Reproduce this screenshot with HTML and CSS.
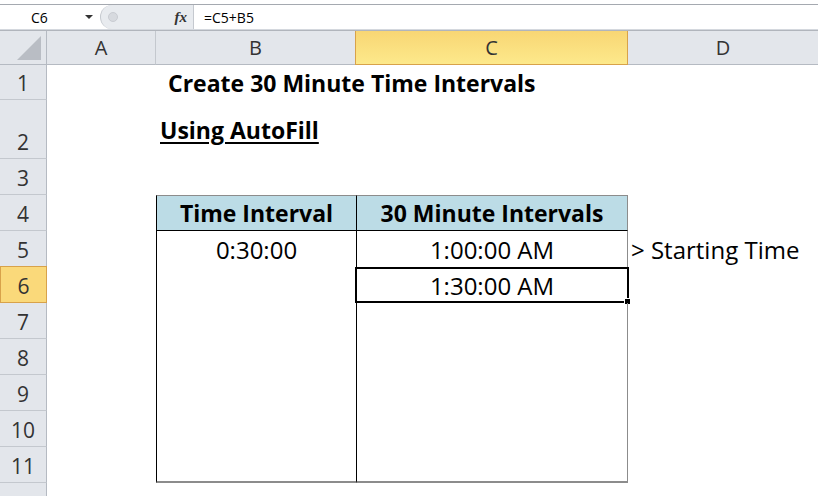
FILE: index.html
```html
<!DOCTYPE html>
<html lang="en">
  <head>
    <meta charset="UTF-8" />
    <meta name="viewport" content="width=device-width, initial-scale=1.0" />
    <title>Create 30 Minute Time Intervals</title>
    <link rel="stylesheet" href="styles.css">
  </head>
  <body>
    <div class="formulaBar">
      <div class="nameBox">
        <span class="cellRef">C6</span>
        <span class="arrow"></span>
      </div>
      <div class="fxArea">
        <span class="knob"></span>
        <span class="fx">fx</span>
      </div>
      <div class="formula">=C5+B5</div>
    </div>
    <div class="sheet">
      <div class="corner"><span class="tri"></span></div>
      <div class="colHead">A</div>
      <div class="colHead">B</div>
      <div class="colHead active">C</div>
      <div class="colHead last">D</div>

      <div class="rowHead">1</div>
      <div class="cell"></div>
      <div class="cell title">Create 30 Minute Time Intervals</div>
      <div class="cell"></div>
      <div class="cell"></div>

      <div class="rowHead">2</div>
      <div class="cell"></div>
      <div class="cell subtitle"><u>Using AutoFill</u></div>
      <div class="cell"></div>
      <div class="cell"></div>

      <div class="rowHead">3</div>
      <div class="cell"></div>
      <div class="cell"></div>
      <div class="cell"></div>
      <div class="cell"></div>

      <div class="rowHead">4</div>
      <div class="cell"></div>
      <div class="cell th colB">Time Interval</div>
      <div class="cell th colC">30 Minute Intervals</div>
      <div class="cell"></div>

      <div class="rowHead">5</div>
      <div class="cell"></div>
      <div class="cell td colB">0:30:00</div>
      <div class="cell td colC">1:00:00 AM</div>
      <div class="cell note">&gt; Starting Time</div>

      <div class="rowHead active">6</div>
      <div class="cell"></div>
      <div class="cell td colB"></div>
      <div class="cell td colC selected">1:30:00 AM<span class="handle"></span></div>
      <div class="cell"></div>

      <div class="rowHead">7</div>
      <div class="cell"></div>
      <div class="cell td colB"></div>
      <div class="cell td colC"></div>
      <div class="cell"></div>

      <div class="rowHead">8</div>
      <div class="cell"></div>
      <div class="cell td colB"></div>
      <div class="cell td colC"></div>
      <div class="cell"></div>

      <div class="rowHead">9</div>
      <div class="cell"></div>
      <div class="cell td colB"></div>
      <div class="cell td colC"></div>
      <div class="cell"></div>

      <div class="rowHead">10</div>
      <div class="cell"></div>
      <div class="cell td colB"></div>
      <div class="cell td colC"></div>
      <div class="cell"></div>

      <div class="rowHead">11</div>
      <div class="cell"></div>
      <div class="cell td colB endRow"></div>
      <div class="cell td colC endRow"></div>
      <div class="cell"></div>

      <div class="rowHead"></div>
      <div class="cell"></div>
      <div class="cell"></div>
      <div class="cell"></div>
      <div class="cell"></div>
    </div>
  </body>
</html>
```

FILE: styles.css
```css
body {
  margin: 0;
  background-color: #fff;
  font-family: "Open Sans", sans-serif;
  color: #000;
  width: 818px;
  height: 496px;
  overflow: hidden;
}

.formulaBar {
  display: flex;
  margin-top: 4px;
  height: 24px;
  border-top: 1px solid #a5a9b0;
  border-bottom: 1px solid #d4d8de;
  font-size: 14px;
}

.nameBox {
  width: 100px;
  display: flex;
  align-items: center;
  position: relative;
}

.cellRef {
  margin-left: 31px;
}

.arrow {
  position: absolute;
  left: 85px;
  top: 10px;
  border-left: 4px solid transparent;
  border-right: 4px solid transparent;
  border-top: 4px solid #333;
}

.fxArea {
  width: 94px;
  background-color: #e8ebef;
  border-radius: 12px 0 0 12px;
  border-left: 1px solid #c5c9cf;
  border-right: 1px solid #c5c9cf;
  display: flex;
  align-items: center;
  justify-content: space-between;
  padding: 0 6px 0 7px;
  box-sizing: border-box;
}

.knob {
  width: 8px;
  height: 8px;
  border-radius: 50%;
  background-color: #d7dadf;
  border: 1px solid #c9ccd2;
}

.fx {
  font-family: "Liberation Serif", serif;
  font-style: italic;
  font-weight: bold;
  font-size: 15px;
  color: #333;
}

.formula {
  display: flex;
  align-items: center;
  padding-left: 10px;
}

.sheet {
  display: grid;
  grid-template-columns: 47px 109px 200px 272px 190px;
  grid-template-rows: 34px 35px 59px 36px 36px 36px 36px 36px 36px 36px 36px 36px 20px;
  border-top: 1px solid #b1b5bc;
}

.corner {
  background-color: #e3e6eb;
  border-right: 1px solid #b5bac2;
  border-bottom: 1px solid #b5bac2;
  position: relative;
}

.tri {
  position: absolute;
  right: 5px;
  bottom: 4px;
  width: 0;
  height: 0;
  border-left: 24px solid transparent;
  border-bottom: 24px solid #b9bdc4;
}

.colHead {
  background-color: #e3e6eb;
  border-right: 1px solid #c4c8ce;
  border-bottom: 1px solid #b5bac2;
  display: flex;
  align-items: center;
  justify-content: center;
  font-size: 20px;
  color: #333;
}

.colHead.last {
  border-right: none;
}

.colHead.active {
  background: linear-gradient(#f8d674, #fde98b);
  border-right: 1px solid #d8a24a;
  border-left: 1px solid #d8a24a;
  margin-left: -1px;
  border-bottom-color: #d8a24a;
}

.rowHead {
  background-color: #e3e6eb;
  border-right: 1px solid #b5bac2;
  border-bottom: 1px solid #c4c8ce;
  display: flex;
  align-items: flex-end;
  justify-content: center;
  padding-bottom: 2px;
  box-sizing: border-box;
  font-size: 21px;
  color: #333;
}

.rowHead.active {
  background-color: #fad97a;
  border: 1px solid #d8a24a;
  margin-top: -1px;
}

.cell {
  display: flex;
  align-items: flex-end;
  padding-bottom: 2px;
  box-sizing: border-box;
  font-size: 24px;
  line-height: 30px;
  white-space: nowrap;
  position: relative;
}

.title {
  font-weight: bold;
  font-size: 23px;
  padding-left: 12px;
}

.subtitle {
  font-weight: bold;
  font-size: 23px;
  padding-left: 4px;
  padding-bottom: 14px;
}

.subtitle u {
  text-underline-offset: 3px;
  text-decoration-thickness: 2px;
}

.th {
  background-color: #bcdce6;
  font-weight: bold;
  font-size: 23px;
  justify-content: center;
  border-top: 1px solid #8c8c8c;
  border-bottom: 1px solid #000;
}

.td {
  justify-content: center;
}

.colB {
  border-left: 1px solid #000;
}

.colC {
  border-left: 1px solid #000;
  border-right: 1px solid #8c8c8c;
}

.endRow {
  border-bottom: 2px solid #8c8c8c;
}

.selected {
  border: 2px solid #000;
  margin-left: -1px;
  margin-right: -1px;
  padding-bottom: 0;
}

.handle {
  position: absolute;
  right: -4px;
  bottom: -4px;
  width: 5px;
  height: 5px;
  background-color: #000;
  border: 1px solid #fff;
}

.note {
  padding-left: 3px;
}
```
